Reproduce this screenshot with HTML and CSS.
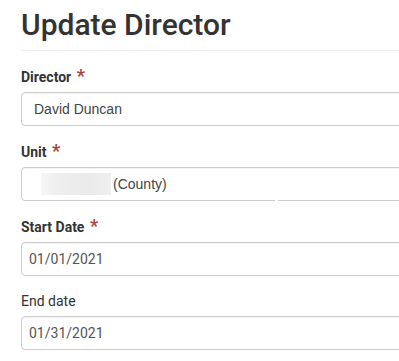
FILE: index.html
```html
<!DOCTYPE html>
<html>
<head>
<meta charset="utf-8">
<link rel="stylesheet" href="styles.css">
</head>
<body>
<div class="page">
  <h1 class="page-header">Update Director</h1>
  <div class="form-group">
    <label class="control-label">Director <span class="req">*</span></label>
    <div class="form-control"><span class="val">David Duncan</span></div>
  </div>
  <div class="form-group">
    <label class="control-label">Unit <span class="req">*</span></label>
    <div class="form-control unit"><span class="blur"></span><span class="val">(County)</span><span class="gap"></span></div>
  </div>
  <div class="form-group">
    <label class="control-label">Start Date <span class="req">*</span></label>
    <div class="form-control date"><span class="val">01/01/2021</span></div>
  </div>
  <div class="form-group">
    <label class="control-label normal">End date</label>
    <div class="form-control date"><span class="val">01/31/2021</span></div>
  </div>
</div>
</body>
</html>
```

FILE: styles.css
```css
html, body {
  margin: 0;
  padding: 0;
  overflow: hidden;
  background: #fff;
}
body {
  font-family: Roboto, "Liberation Sans", sans-serif;
  color: #333;
}
.page {
  padding-left: 21px;
  width: 420px;
}
.page-header {
  margin: 0;
  padding-top: 8px;
  padding-bottom: 9px;
  font-size: 30px;
  line-height: 33px;
  font-weight: 500;
  color: #333;
  border-bottom: 1px solid #eee;
}
.form-group {
  margin-top: 15px;
}
.control-label {
  display: block;
  font-size: 14px;
  line-height: 20px;
  font-weight: 700;
  margin-bottom: 5px;
  color: #333;
}
.control-label.normal {
  font-weight: 400;
}
.req {
  color: #a94442;
  font-size: 18px;
  margin-left: 2px;
}
.form-control {
  position: relative;
  box-sizing: border-box;
  height: 34px;
  border: 1px solid #ccc;
  border-radius: 4px;
  padding: 0 12px;
  display: flex;
  align-items: center;
  font-family: "Liberation Sans", Arial, sans-serif;
  font-size: 14px;
  color: #444;
  box-shadow: inset 0 1px 1px rgba(0,0,0,0.05);
}
.form-control.date {
  padding-left: 7px;
  font-family: Roboto, sans-serif;
  color: #555;
}
.unit {
  padding-left: 19px;
}
.blur {
  display: inline-block;
  width: 70px;
  height: 22px;
  margin-right: 2px;
  background: linear-gradient(90deg, #f6f6f6 0%, #efefef 20%, #ececec 45%, #eaeaea 70%, #efefef 100%);
}
.gap {
  position: absolute;
  left: 253px;
  bottom: -1px;
  width: 3px;
  height: 1px;
  background: #fff;
}
```
